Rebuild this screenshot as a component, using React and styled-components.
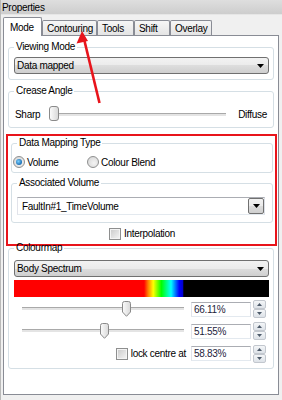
import styled, { createGlobalStyle } from "styled-components";

const GlobalStyle = createGlobalStyle`
  html, body {
    margin: 0;
    padding: 0;
    background: #f0f0f0;
  }
  body {
    font-family: "Liberation Sans", Arial, sans-serif;
    font-size: 10px;
    letter-spacing: -0.3px;
    color: #000;
  }
  * {
    box-sizing: border-box;
  }
`;

const tabs = [
	{ label: "Mode", width: 39, active: true },
	{ label: "Contouring", width: 55 },
	{ label: "Tools", width: 37 },
	{ label: "Shift", width: 36 },
	{ label: "Overlay", width: 42 },
];

const DownArrow = () => (
	<svg width='7' height='4' viewBox='0 0 7 4'>
		<polygon points='0,0 7,0 3.5,4' fill='#000' />
	</svg>
);

const PointerThumb = () => (
	<svg width='9' height='16' viewBox='0 0 9 16'>
		<defs>
			<linearGradient id='thumbFill' x1='0' y1='0' x2='1' y2='0'>
				<stop offset='0' stopColor='#fbfbfb' />
				<stop offset='1' stopColor='#d9d9d9' />
			</linearGradient>
		</defs>
		<path
			d='M0.5 2.5 Q0.5 0.5 2.5 0.5 H6.5 Q8.5 0.5 8.5 2.5 V11 L4.5 15.3 L0.5 11 Z'
			fill='url(#thumbFill)'
			stroke='#8a8a8a'
		/>
	</svg>
);

// eslint-disable-next-line react/prop-types
const SpinBox = ({ value }) => (
	<>
		<SpinField>{value}</SpinField>
		<SpinButtons>
			<SpinButton>
				<svg width='5' height='3' viewBox='0 0 5 3'>
					<polygon points='0,3 5,3 2.5,0' fill='#4d5a6a' />
				</svg>
			</SpinButton>
			<SpinButton>
				<svg width='5' height='3' viewBox='0 0 5 3'>
					<polygon points='0,0 5,0 2.5,3' fill='#4d5a6a' />
				</svg>
			</SpinButton>
		</SpinButtons>
	</>
);

// eslint-disable-next-line react/prop-types
const ColourSlider = ({ value }) => (
	<SliderRow>
		<Track>
			<Groove />
			<ThumbSlot style={{ left: `${(value / 100) * 152}px` }}>
				<PointerThumb />
			</ThumbSlot>
		</Track>
		<SpinBox value={`${value.toFixed(2)}%`} />
	</SliderRow>
);

const App = () => {
	return (
		<Window>
			<GlobalStyle />
			<TitleBar>Properties</TitleBar>
			<TabBar>
				{tabs.map((t) => (
					<Tab key={t.label} $active={t.active} $width={t.width}>
						{t.label}
					</Tab>
				))}
			</TabBar>
			<Pane>
				<Group>
					<Legend>Viewing Mode</Legend>
					<Combo $mt={4} $mb={5}>
						<span>Data mapped</span>
						<DownArrow />
					</Combo>
				</Group>

				<Group $mt={5}>
					<Legend>Crease Angle</Legend>
					<CreaseRow>
						<span>Sharp</span>
						<CreaseTrack>
							<Groove />
							<RoundThumb />
						</CreaseTrack>
						<span>Diffuse</span>
					</CreaseRow>
				</Group>

				<Highlight>
					<Group $flush $mt={1}>
						<Legend>Data Mapping Type</Legend>
						<RadioRow>
							<RadioOption $width={74}>
								<Radio $checked />
								<span>Volume</span>
							</RadioOption>
							<RadioOption>
								<Radio />
								<span>Colour Blend</span>
							</RadioOption>
						</RadioRow>
					</Group>

					<Group $flush $mt={4} $padRight={7}>
						<Legend>Associated Volume</Legend>
						<EditCombo>
							<span>FaultIn#1_TimeVolume</span>
							<DropButton>
								<DownArrow />
							</DropButton>
						</EditCombo>
					</Group>

					<CheckRow>
						<CheckBox />
						<span>Interpolation</span>
					</CheckRow>
				</Highlight>

				<Group $mt={-4}>
					<Legend>Colourmap</Legend>
					<Combo $mt={6}>
						<span>Body Spectrum</span>
						<DownArrow />
					</Combo>
					<ColourBar />
					<ColourSlider value={66.11} />
					<ColourSlider value={51.55} />
					<LockRow>
						<CheckBox />
						<LockLabel>lock centre at</LockLabel>
						<SpinBox value='58.83%' />
					</LockRow>
				</Group>
			</Pane>

			<Annotation width='282' height='400' viewBox='0 0 282 400'>
				<line x1='98.5' y1='103' x2='83.5' y2='41' stroke='#e8141b' strokeWidth='2.6' />
				<polygon points='81,31 75.5,43.5 87,41' fill='#e8141b' />
			</Annotation>
		</Window>
	);
};

export default App;

const Window = styled.div`
	position: relative;
	width: 282px;
	height: 400px;
	overflow: hidden;
	background: #f0f0f0;
	border-left: 1px solid #b9b9b9;
`;

const TitleBar = styled.div`
	height: 15px;
	line-height: 15px;
	padding-left: 1px;
	background: linear-gradient(#dedede, #cdcdcd);
	border-bottom: 1px solid #e6e6e6;
`;

const TabBar = styled.div`
	display: flex;
	align-items: flex-end;
	height: 19px;
	margin-top: 2px;
	padding-left: 2px;
`;

const Tab = styled.div`
	width: ${(p) => p.$width}px;
	height: ${(p) => (p.$active ? 19 : 15)}px;
	margin-bottom: ${(p) => (p.$active ? 0 : 1)}px;
	padding: ${(p) => (p.$active ? "3px 0 0 6px" : "1px 0 0 4px")};
	line-height: 13px;
	border: 1px solid #898c95;
	border-bottom: none;
	border-radius: 2px 2px 0 0;
	background: ${(p) => (p.$active ? "#fff" : "linear-gradient(#f6f6f6, #e4e4e4)")};
	position: ${(p) => (p.$active ? "relative" : "static")};
	z-index: ${(p) => (p.$active ? 1 : "auto")};
	white-space: nowrap;
`;

const Pane = styled.div`
	display: flex;
	flex-direction: column;
	height: 360px;
	margin: -1px 3px 0 2px;
	padding-top: 5px;
	background: #fff;
	border: 1px solid #898c95;
`;

const Group = styled.fieldset`
	min-width: 0;
	margin: ${(p) => p.$mt || 0}px ${(p) => (p.$flush ? 0 : 4)}px 0;
	padding: 0 ${(p) => p.$padRight || 4}px 0 5px;
	border: 1px solid #d5dfe5;
	border-radius: 3px;
`;

const Legend = styled.legend`
	padding: 0 2px;
	line-height: 12px;
`;

const Combo = styled.div`
	display: flex;
	align-items: center;
	justify-content: space-between;
	height: 17px;
	margin-top: ${(p) => p.$mt}px;
	margin-bottom: ${(p) => p.$mb || 0}px;
	padding: 0 4px 0 2px;
	border: 1px solid #707070;
	border-radius: 3px;
	background: linear-gradient(#f2f2f2 0%, #ebebeb 50%, #dddddd 50%, #cfcfcf 100%);
`;

const EditCombo = styled.div`
	display: flex;
	align-items: center;
	justify-content: space-between;
	height: 18px;
	margin-top: 8px;
	margin-bottom: 7px;
	padding-left: 4px;
	background: #fff;
	border: 1px solid #abadb3;
	border-left-color: #e2e3ea;
	border-right-color: #dbdfe6;
	border-bottom-color: #e3e9ef;
`;

const DropButton = styled.div`
	display: flex;
	align-items: center;
	justify-content: center;
	width: 16px;
	height: 16px;
	border: 1px solid #707070;
	border-radius: 2px;
	background: linear-gradient(#f2f2f2 0%, #ebebeb 50%, #dddddd 50%, #cfcfcf 100%);
`;

const CreaseRow = styled.div`
	display: flex;
	align-items: center;
	height: 16px;
	margin: 9px 2px 5px 1px;
`;

const CreaseTrack = styled.div`
	position: relative;
	flex: 1;
	height: 16px;
	margin: 0 12px 0 10px;
	display: flex;
	align-items: center;
`;

const Groove = styled.div`
	width: 100%;
	height: 3px;
	border-top: 1px solid #a9a9a9;
	background: #e4e4e4;
`;

const RoundThumb = styled.div`
	position: absolute;
	left: -1px;
	top: 0;
	width: 10px;
	height: 15px;
	border: 1px solid #8a8a8a;
	border-radius: 3px;
	background: linear-gradient(90deg, #fbfbfb, #d9d9d9);
`;

const Highlight = styled.div`
	margin: 6px 1px 0 2px;
	padding: 0 2px 4px 3px;
	border: 2px solid #e8141b;
`;

const RadioRow = styled.div`
	display: flex;
	align-items: center;
	height: 14px;
	margin: 6px 0 3px -4px;
`;

const RadioOption = styled.div`
	display: flex;
	align-items: center;
	gap: 2px;
	width: ${(p) => (p.$width ? `${p.$width}px` : "auto")};
`;

const Radio = styled.span`
	position: relative;
	width: 12px;
	height: 12px;
	border-radius: 50%;
	border: 1px solid #8e8f8f;
	background: radial-gradient(circle at 60% 60%, #f4f4f4, #d2d2d2);

	&::after {
		content: "";
		display: ${(p) => (p.$checked ? "block" : "none")};
		position: absolute;
		left: 2px;
		top: 2px;
		width: 6px;
		height: 6px;
		border-radius: 50%;
		background: radial-gradient(circle at 40% 40%, #7ad0ff, #1b6fb5 70%, #0f4a82);
	}
`;

const CheckRow = styled.div`
	display: flex;
	align-items: center;
	justify-content: center;
	gap: 3px;
	height: 13px;
	margin-top: 4px;
`;

const CheckBox = styled.span`
	width: 12px;
	height: 12px;
	border: 1px solid #8e8f8f;
	box-shadow: inset 0 0 0 1px #f4f4f4;
	background: linear-gradient(135deg, #c9c9c9, #f6f6f6);
`;

const ColourBar = styled.div`
	height: 17px;
	margin-top: 3px;
	background: linear-gradient(
		to right,
		#ff0000 0%,
		#ff0000 51%,
		#ff8000 52.6%,
		#ffff00 54.6%,
		#00ff00 57.8%,
		#00ffff 61.6%,
		#0000ff 64.8%,
		#0000c8 66.4%,
		#000 66.5%,
		#000 100%
	);
`;

const SliderRow = styled.div`
	display: flex;
	align-items: center;
	height: 16px;
	margin-top: 4px;
	padding: 0 3px 0 8px;

	& + & {
		margin-top: 6px;
	}
`;

const Track = styled.div`
	position: relative;
	flex: 1;
	height: 16px;
	margin-right: 7px;
	padding-top: 6px;
`;

const ThumbSlot = styled.div`
	position: absolute;
	top: 0;
	line-height: 0;
`;

const SpinField = styled.div`
	width: 60px;
	height: 15px;
	line-height: 13px;
	padding-left: 2px;
	color: #1e1e3c;
	background: #fff;
	border: 1px solid #abadb3;
	border-left-color: #e2e3ea;
	border-right-color: #dbdfe6;
	border-bottom-color: #e3e9ef;
`;

const SpinButtons = styled.div`
	display: flex;
	flex-direction: column;
	width: 13px;
	height: 18px;
	margin-left: 2px;
`;

const SpinButton = styled.div`
	flex: 1;
	display: flex;
	align-items: center;
	justify-content: center;
	border: 1px solid #c2c7ce;
	border-radius: 2px;
	background: linear-gradient(#f4f6f8, #dde2e8);
`;

const LockRow = styled.div`
	display: flex;
	align-items: center;
	justify-content: flex-end;
	height: 15px;
	margin: 7px 0 7px;
	padding-right: 3px;
`;

const LockLabel = styled.span`
	margin: 0 5px 0 3px;
`;

const Annotation = styled.svg`
	position: absolute;
	left: 0;
	top: 0;
	pointer-events: none;
`;
